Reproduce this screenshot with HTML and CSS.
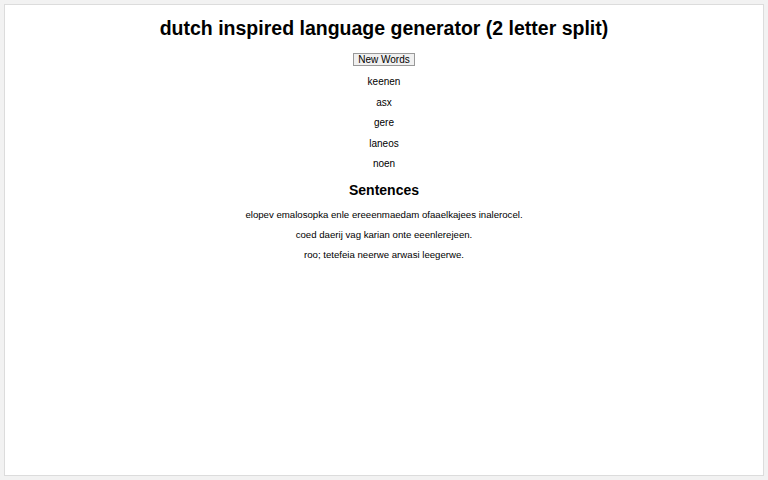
FILE: index.html
```html
<!DOCTYPE html>
<html lang="en">
<head>
<meta charset="utf-8">
<title>dutch inspired language generator</title>
<link rel="stylesheet" href="styles.css">
</head>
<body>
<main class="panel">
  <h1 class="title">dutch inspired language generator (2 letter split)</h1>
  <div class="actions"><button class="btn" type="button">New Words</button></div>
  <ul class="words">
    <li>keenen</li>
    <li>asx</li>
    <li>gere</li>
    <li>laneos</li>
    <li>noen</li>
  </ul>
  <h2 class="subtitle">Sentences</h2>
  <ul class="sentences">
    <li>elopev emalosopka enle ereeenmaedam ofaaelkajees inalerocel.</li>
    <li>coed daerij vag karian onte eeenlerejeen.</li>
    <li>roo; tetefeia neerwe arwasi leegerwe.</li>
  </ul>
</main>
</body>
</html>
```
FILE: styles.css
```css
html, body {
  margin: 0;
  height: 100%;
}
body {
  background: #f2f2f2;
  padding: 4px;
  box-sizing: border-box;
  font-family: "Liberation Sans", Arial, sans-serif;
  color: #000;
}
.panel {
  box-sizing: border-box;
  height: 100%;
  background: #fff;
  border: 1px solid #dcdcdc;
  text-align: center;
  padding-top: 14px;
}
.title {
  margin: 0;
  font-size: 19.5px;
  line-height: 18px;
  font-weight: bold;
}
.actions {
  margin-top: 12px;
}
.btn {
  font-family: "Liberation Sans", Arial, sans-serif;
  font-size: 10px;
  line-height: 11px;
  padding: 0 4px;
  background: #f0f0f0;
  border: 1px solid #999;
  border-radius: 0;
  color: #000;
}
.words, .sentences {
  list-style: none;
  margin: 0;
  padding: 0;
  font-size: 10px;
}
.words {
  margin-top: 5px;
}
.words li {
  line-height: 20.5px;
}
.subtitle {
  margin: 5px 0 0;
  font-size: 14px;
  line-height: 20px;
  font-weight: bold;
}
.sentences {
  margin-top: 5px;
  font-size: 9.65px;
}
.sentences li {
  line-height: 20.4px;
}
```
